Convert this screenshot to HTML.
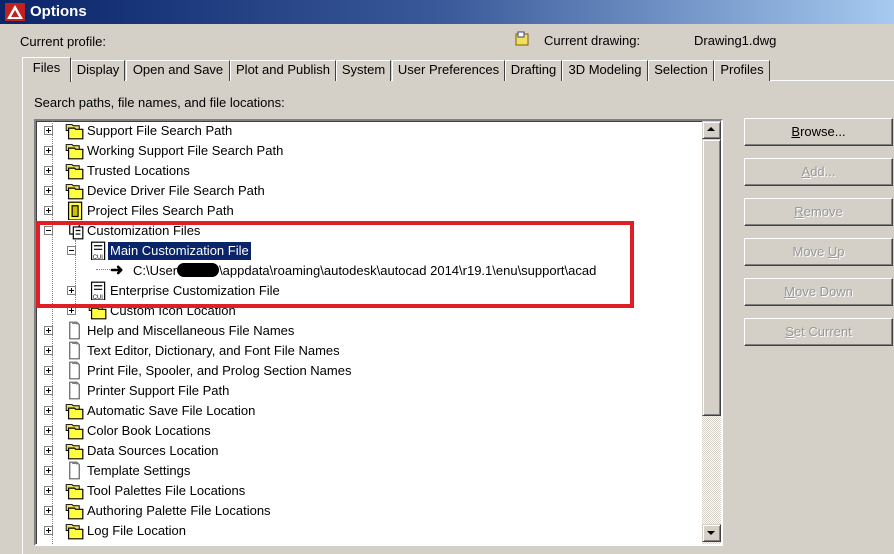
<!DOCTYPE html>
<html><head><style>
*{margin:0;padding:0;box-sizing:border-box}
body{width:894px;height:554px;overflow:hidden;background:#d4d0c8;font-family:"Liberation Sans",Arial,sans-serif;font-size:13px;color:#000;position:relative}
.a{position:absolute;white-space:nowrap}
.title{left:0;top:0;width:894px;height:24px;background:linear-gradient(90deg,#0a246a 0%,#3a5a9a 50%,#a6caf0 100%);color:#fff;font-weight:bold;font-size:15px;line-height:24px;padding-left:30px}
.tab{position:absolute;top:60px;height:21px;border:1px solid #fff;border-right:1px solid #404040;border-bottom:none;line-height:18px;text-align:center;font-size:13px;background:#d4d0c8}
.btn{position:absolute;left:744px;width:149px;height:28px;border:1px solid;border-color:#fff #404040 #404040 #fff;box-shadow:inset -1px -1px #808080;text-align:center;line-height:26px;color:#000}
.dis{color:#989898;text-shadow:1px 1px #fff}
.row{position:absolute;height:20px;line-height:20px}
.pm{position:absolute;width:9px;height:9px;border:1px solid #808080;background:#fff}
.pm:before{content:"";position:absolute;left:1px;top:3px;width:5px;height:1px;background:#000}
.pm.p:after{content:"";position:absolute;left:3px;top:1px;width:1px;height:5px;background:#000}
#t .row{margin-top:1px}
#t svg{width:19px;height:19px}
</style></head><body>
<div class="a title">Options</div>
<svg class="a" style="left:5px;top:3px" width="20" height="18"><rect width="20" height="18" fill="#c02020"/><path d="M10 2L18 16H2Z" fill="#fff"/><path d="M10 7L14 14H6Z" fill="#c02020"/></svg>
<div class="a" style="left:20px;top:34px">Current profile:</div>
<svg class="a" style="left:514px;top:31px" width="16" height="16"><rect x="2" y="3" width="12" height="11" fill="#f0e060" stroke="#806000"/><rect x="4" y="1" width="6" height="5" fill="#fff" stroke="#404080"/></svg>
<div class="a" style="left:544px;top:33px">Current drawing:</div>
<div class="a" style="left:694px;top:33px">Drawing1.dwg</div>
<div class="a" style="left:22px;top:80px;width:872px;height:1px;background:#fff"></div>
<div class="a" style="left:22px;top:80px;width:1px;height:474px;background:#fff"></div>
<div class="tab" style="left:22px;top:57px;width:49px;height:25px;z-index:2;line-height:20px">Files</div>
<div class="tab" style="left:71px;width:54px">Display</div>
<div class="tab" style="left:126px;width:104px">Open and Save</div>
<div class="tab" style="left:230px;width:106px">Plot and Publish</div>
<div class="tab" style="left:336px;width:55px">System</div>
<div class="tab" style="left:392px;width:113px">User Preferences</div>
<div class="tab" style="left:505px;width:57px">Drafting</div>
<div class="tab" style="left:562px;width:86px">3D Modeling</div>
<div class="tab" style="left:648px;width:66px">Selection</div>
<div class="tab" style="left:714px;width:56px">Profiles</div>
<div class="a" style="left:34px;top:95px">Search paths, file names, and file locations:</div>
<div class="a" style="left:34px;top:119px;width:689px;height:427px;background:#fff;border:2px solid;border-color:#808080 #fff #fff #808080;box-shadow:inset 1px 1px #404040"></div>
<div class="a" style="left:702px;top:121px;width:19px;height:423px;background:repeating-conic-gradient(#d4d0c8 0 25%,#fff 0 50%) 0 0/2px 2px"></div>
<div class="a" style="left:702px;top:121px;width:19px;height:18px;background:#d4d0c8;border:1px solid;border-color:#d4d0c8 #404040 #404040 #d4d0c8;box-shadow:inset 1px 1px #fff,inset -1px -1px #808080"></div>
<div class="a" style="left:707px;top:127px;border:4px solid transparent;border-bottom:4px solid #000;border-top:none;width:0"></div>
<div class="a" style="left:702px;top:139px;width:19px;height:277px;background:#d4d0c8;border:1px solid;border-color:#d4d0c8 #404040 #404040 #d4d0c8;box-shadow:inset 1px 1px #fff,inset -1px -1px #808080"></div>
<div class="a" style="left:702px;top:524px;width:19px;height:18px;background:#d4d0c8;border:1px solid;border-color:#d4d0c8 #404040 #404040 #d4d0c8;box-shadow:inset 1px 1px #fff,inset -1px -1px #808080"></div>
<div class="a" style="left:707px;top:531px;border:4px solid transparent;border-top:4px solid #000;border-bottom:none;width:0"></div>
<div class="a" style="left:52px;top:121px;width:1px;height:423px;border-left:1px dotted #808080"></div>
<div class="a" style="left:75px;top:240px;width:1px;height:70px;border-left:1px dotted #808080"></div>
<svg width="0" height="0" style="position:absolute"><defs>
<g id="fo"><path d="M1 3h5l1 1h5v4H1z" fill="#e8e070" stroke="#000" stroke-width=".8"/><path d="M3 6h5l1 1h6v8H3z" fill="#ffff40" stroke="#000"/></g>
<g id="do"><path d="M4 1h6l2 2v12H4z" fill="#fff" stroke="#606060"/><path d="M6 2h5M10 1v2" stroke="#808080"/></g>
<g id="pr"><rect x="3" y="1" width="11" height="15" fill="#ffff40" stroke="#000"/><rect x="6" y="4" width="5" height="9" fill="#d0c000" stroke="#000"/></g>
<g id="cu"><rect x="3" y="1" width="11" height="15" fill="#fff" stroke="#000"/><path d="M5 4h7M5 7h7" stroke="#000"/><text x="4" y="15" font-size="5" font-family="Liberation Sans">CUI</text></g>
<g id="cf"><rect x="4" y="1" width="8" height="10" fill="#fff" stroke="#000"/><rect x="7" y="5" width="8" height="10" fill="#fff" stroke="#000"/><path d="M9 8h4M9 11h4" stroke="#000"/></g>
</defs></svg>
<div id="t" style="position:absolute;left:0;top:0">
<div class="pm p" style="left:44px;top:126px"></div><svg class="a" style="left:65px;top:121px" viewBox="0 0 16 16"><use href="#fo"/></svg><div class="row a" style="left:87px;top:120px">Support File Search Path</div>
<div class="pm p" style="left:44px;top:146px"></div><svg class="a" style="left:65px;top:141px" viewBox="0 0 16 16"><use href="#fo"/></svg><div class="row a" style="left:87px;top:140px">Working Support File Search Path</div>
<div class="pm p" style="left:44px;top:166px"></div><svg class="a" style="left:65px;top:161px" viewBox="0 0 16 16"><use href="#fo"/></svg><div class="row a" style="left:87px;top:160px">Trusted Locations</div>
<div class="pm p" style="left:44px;top:186px"></div><svg class="a" style="left:65px;top:181px" viewBox="0 0 16 16"><use href="#fo"/></svg><div class="row a" style="left:87px;top:180px">Device Driver File Search Path</div>
<div class="pm p" style="left:44px;top:206px"></div><svg class="a" style="left:65px;top:201px" viewBox="0 0 16 16"><use href="#pr"/></svg><div class="row a" style="left:87px;top:200px">Project Files Search Path</div>
<div class="pm" style="left:44px;top:226px"></div><svg class="a" style="left:65px;top:221px" viewBox="0 0 16 16"><use href="#cf"/></svg><div class="row a" style="left:87px;top:220px">Customization Files</div>
<div class="pm" style="left:67px;top:246px"></div><svg class="a" style="left:88px;top:241px" viewBox="0 0 16 16"><use href="#cu"/></svg><div class="row a" style="left:108px;top:241px;height:18px;line-height:18px;background:#0a246a;color:#fff;padding:0 2px;outline:1px dotted #fff">Main Customization File</div>
<div class="a" style="left:96px;top:269px;width:14px;border-top:1px dotted #808080"></div>
<div class="a" style="left:110px;top:261px;font-size:16px;font-weight:bold;line-height:20px">&#10140;</div>
<div class="row a" style="left:133px;top:260px">C:\User<span style="display:inline-block;width:42px;height:14px;background:#000;border-radius:7px;vertical-align:-2px"></span>\appdata\roaming\autodesk\autocad 2014\r19.1\enu\support\acad</div>
<div class="pm p" style="left:67px;top:286px"></div><svg class="a" style="left:88px;top:281px" viewBox="0 0 16 16"><use href="#cu"/></svg><div class="row a" style="left:110px;top:280px">Enterprise Customization File</div>
<div class="pm p" style="left:67px;top:306px"></div><svg class="a" style="left:88px;top:301px" viewBox="0 0 16 16"><use href="#fo"/></svg><div class="row a" style="left:110px;top:300px">Custom Icon Location</div>
<div class="pm p" style="left:44px;top:326px"></div><svg class="a" style="left:65px;top:321px" viewBox="0 0 16 16"><use href="#do"/></svg><div class="row a" style="left:87px;top:320px">Help and Miscellaneous File Names</div>
<div class="pm p" style="left:44px;top:346px"></div><svg class="a" style="left:65px;top:341px" viewBox="0 0 16 16"><use href="#do"/></svg><div class="row a" style="left:87px;top:340px">Text Editor, Dictionary, and Font File Names</div>
<div class="pm p" style="left:44px;top:366px"></div><svg class="a" style="left:65px;top:361px" viewBox="0 0 16 16"><use href="#do"/></svg><div class="row a" style="left:87px;top:360px">Print File, Spooler, and Prolog Section Names</div>
<div class="pm p" style="left:44px;top:386px"></div><svg class="a" style="left:65px;top:381px" viewBox="0 0 16 16"><use href="#do"/></svg><div class="row a" style="left:87px;top:380px">Printer Support File Path</div>
<div class="pm p" style="left:44px;top:406px"></div><svg class="a" style="left:65px;top:401px" viewBox="0 0 16 16"><use href="#fo"/></svg><div class="row a" style="left:87px;top:400px">Automatic Save File Location</div>
<div class="pm p" style="left:44px;top:426px"></div><svg class="a" style="left:65px;top:421px" viewBox="0 0 16 16"><use href="#fo"/></svg><div class="row a" style="left:87px;top:420px">Color Book Locations</div>
<div class="pm p" style="left:44px;top:446px"></div><svg class="a" style="left:65px;top:441px" viewBox="0 0 16 16"><use href="#fo"/></svg><div class="row a" style="left:87px;top:440px">Data Sources Location</div>
<div class="pm p" style="left:44px;top:466px"></div><svg class="a" style="left:65px;top:461px" viewBox="0 0 16 16"><use href="#do"/></svg><div class="row a" style="left:87px;top:460px">Template Settings</div>
<div class="pm p" style="left:44px;top:486px"></div><svg class="a" style="left:65px;top:481px" viewBox="0 0 16 16"><use href="#fo"/></svg><div class="row a" style="left:87px;top:480px">Tool Palettes File Locations</div>
<div class="pm p" style="left:44px;top:506px"></div><svg class="a" style="left:65px;top:501px" viewBox="0 0 16 16"><use href="#fo"/></svg><div class="row a" style="left:87px;top:500px">Authoring Palette File Locations</div>
<div class="pm p" style="left:44px;top:526px"></div><svg class="a" style="left:65px;top:521px" viewBox="0 0 16 16"><use href="#fo"/></svg><div class="row a" style="left:87px;top:520px">Log File Location</div>
</div>
<div class="a" style="left:36px;top:221px;width:598px;height:87px;border:4px solid #e01e25"></div>
<div class="btn" style="top:118px"><u>B</u>rowse...</div>
<div class="btn dis" style="top:158px"><u>A</u>dd...</div>
<div class="btn dis" style="top:198px"><u>R</u>emove</div>
<div class="btn dis" style="top:238px">Move <u>U</u>p</div>
<div class="btn dis" style="top:278px"><u>M</u>ove Down</div>
<div class="btn dis" style="top:318px"><u>S</u>et Current</div>
</body></html>
